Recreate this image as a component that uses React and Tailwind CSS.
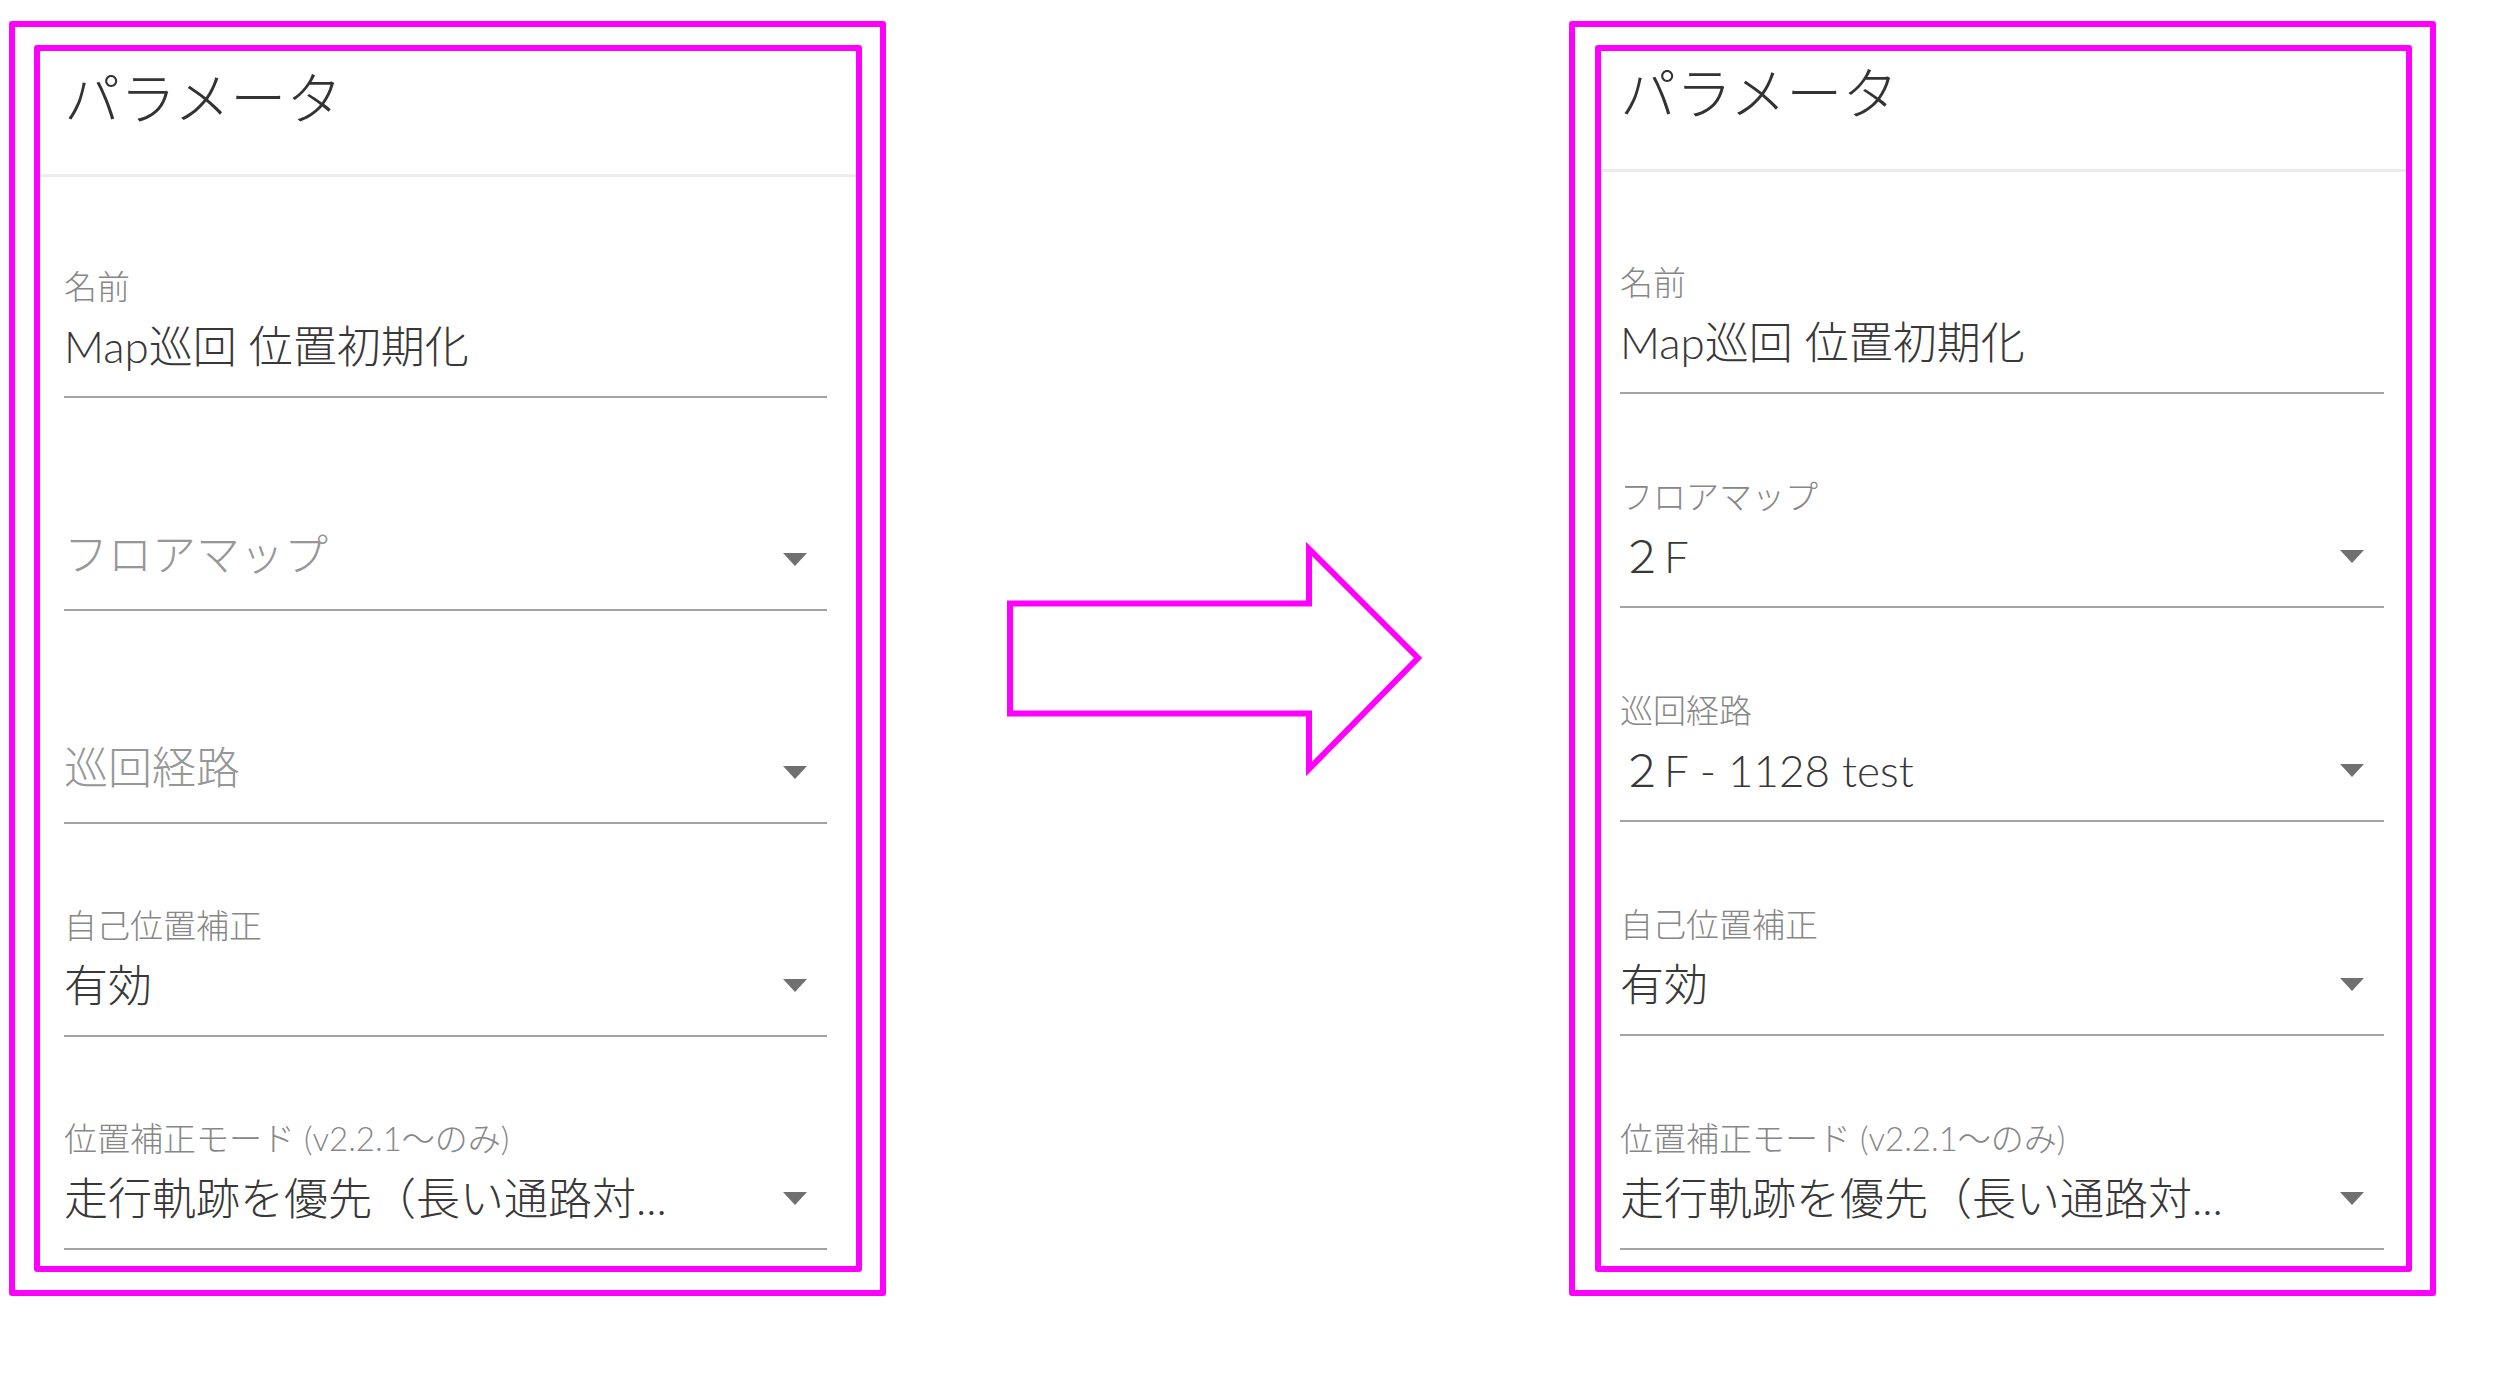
import React from "react";

const Caret = () => (
  <span className="h-0 w-0 shrink-0 border-x-[12px] border-t-[13px] border-x-transparent border-t-[#707070]" />
);

const Field = ({ label, value, placeholder }) => (
  <div className="border-b-2 border-[#a3a3a3] pb-[10px]">
    <div className="h-[40px] text-[33px] leading-[40px] text-[#878787]">{label}</div>
    <div className="flex h-[80px] items-center justify-between pr-[20px]">
      {placeholder ? (
        <span className="-mt-[10px] text-[44px] leading-[1.2] text-[#979797]">{placeholder}</span>
      ) : (
        <span className="text-[44px] leading-[1.2] text-[#383838]">{value}</span>
      )}
      <Caret />
    </div>
  </div>
);

const Panel = ({ outerClass, headerClass, bodyClass, fields }) => (
  <div className={`shrink-0 rounded-[3px] border-[6px] border-[#ff00ff] ${outerClass}`}>
    <div className="rounded-[3px] border-[6px] border-[#ff00ff] bg-white font-light">
      <div
        className={`border-b-[3px] border-[#ececec] text-[56px] leading-[56px] text-[#333] ${headerClass}`}
      >
        パラメータ
      </div>
      <div className={`flex flex-col ${bodyClass}`}>
        {fields.map((f, i) =>
          f.name ? (
            <div key={i} className="border-b-2 border-[#a3a3a3] pb-[10px]">
              <div className="h-[40px] text-[33px] leading-[40px] text-[#878787]">{f.label}</div>
              <div className="flex h-[80px] items-center">
                <span className="text-[44px] leading-[1.2] text-[#383838]">{f.value}</span>
              </div>
            </div>
          ) : (
            <Field key={i} {...f} />
          )
        )}
      </div>
    </div>
  </div>
);

// the select shows the mode cut short, as in the screenshot
const mode = "走行軌跡を優先（長い通路対...";

const before = [
  { name: true, label: "名前", value: "Map巡回 位置初期化" },
  { placeholder: "フロアマップ" },
  { placeholder: "巡回経路" },
  { label: "自己位置補正", value: "有効" },
  { label: "位置補正モード (v2.2.1〜のみ)", value: mode },
];

const after = [
  { name: true, label: "名前", value: "Map巡回 位置初期化" },
  { label: "フロアマップ", value: "２F" },
  { label: "巡回経路", value: "２F - 1128 test" },
  { label: "自己位置補正", value: "有効" },
  { label: "位置補正モード (v2.2.1〜のみ)", value: mode },
];

export default function App() {
  return (
    <div className="flex h-[1400px] w-[2500px] items-start bg-white pl-[9px] pt-[21px] font-['Lato','Noto_Sans_CJK_JP',sans-serif]">
      <Panel
        outerClass="w-[877px] py-[18px] pl-[19px] pr-[18px]"
        headerClass="h-[126px] pl-[24px] pt-[19px]"
        bodyClass="gap-[81px] pb-[16px] pl-[24px] pr-[29px] pt-[89px]"
        fields={before}
      />

      <svg className="ml-[110px] mt-[512px] shrink-0" width="440" height="250" viewBox="0 0 440 250">
        <polygon
          points="14,70.5 313,70.5 313,16 422,125 313,236 313,180.5 14,180.5"
          fill="none"
          stroke="#ff00ff"
          strokeWidth="6"
          strokeLinejoin="miter"
        />
      </svg>

      <Panel
        outerClass="ml-[133px] w-[867px] py-[18px] pl-[20px] pr-[18px]"
        headerClass="h-[121px] pl-[19px] pt-[14px]"
        bodyClass="gap-[82px] pb-[16px] pl-[19px] pr-[22px] pt-[90px]"
        fields={after}
      />
    </div>
  );
}
